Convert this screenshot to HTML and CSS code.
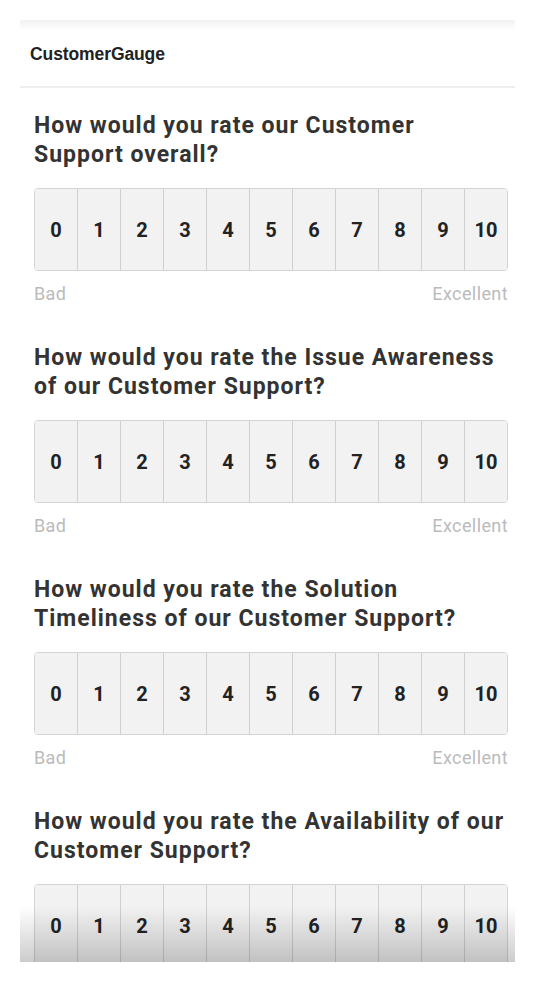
FILE: index.html
```html
<!DOCTYPE html>
<html lang="en">
  <head>
    <meta charset="UTF-8" />
    <meta name="viewport" content="width=device-width, initial-scale=1.0" />
    <title>Customer Support Survey</title>
    <link rel="stylesheet" href="styles.css">
  </head>
  <body>
    <main class="survey">
      <header class="survey-header">
        <span class="logo">CustomerGauge</span>
      </header>

      <section class="question">
        <h2>How would you rate our Customer Support overall?</h2>
        <div class="scale">
          <button>0</button><button>1</button><button>2</button><button>3</button>
          <button>4</button><button>5</button><button>6</button><button>7</button>
          <button>8</button><button>9</button><button>10</button>
        </div>
        <div class="scale-labels"><span>Bad</span><span>Excellent</span></div>
      </section>

      <section class="question">
        <h2>How would you rate the Issue Awareness of our Customer Support?</h2>
        <div class="scale">
          <button>0</button><button>1</button><button>2</button><button>3</button>
          <button>4</button><button>5</button><button>6</button><button>7</button>
          <button>8</button><button>9</button><button>10</button>
        </div>
        <div class="scale-labels"><span>Bad</span><span>Excellent</span></div>
      </section>

      <section class="question">
        <h2>How would you rate the Solution Timeliness of our Customer Support?</h2>
        <div class="scale">
          <button>0</button><button>1</button><button>2</button><button>3</button>
          <button>4</button><button>5</button><button>6</button><button>7</button>
          <button>8</button><button>9</button><button>10</button>
        </div>
        <div class="scale-labels"><span>Bad</span><span>Excellent</span></div>
      </section>

      <section class="question">
        <h2>How would you rate the Availability of our Customer Support?</h2>
        <div class="scale">
          <button>0</button><button>1</button><button>2</button><button>3</button>
          <button>4</button><button>5</button><button>6</button><button>7</button>
          <button>8</button><button>9</button><button>10</button>
        </div>
      </section>
    </main>
  </body>
</html>
```

FILE: styles.css
```css
body {
  margin: 0;
  background: #fff;
  font-family: Roboto, "Liberation Sans", sans-serif;
}

.survey {
  position: relative;
  width: 495px;
  height: 942px;
  margin: 20px 0 0 20px;
  overflow: hidden;

  &::after {
    content: "";
    position: absolute;
    left: 0;
    right: 0;
    bottom: 0;
    height: 56px;
    background: linear-gradient(rgba(0, 0, 0, 0), rgba(0, 0, 0, 0.2));
  }
}

.survey-header {
  display: flex;
  align-items: center;
  height: 68px;
  padding: 2px 0 0 10px;
  background: linear-gradient(#f1f1f1, #fff 10px);
  border-bottom: 2px solid #eee;
  box-sizing: border-box;
}

.logo {
  font-family: "Liberation Sans", Arial, sans-serif;
  font-weight: bold;
  font-size: 17.5px;
  letter-spacing: -0.1px;
  color: #222;
}

.question {
  padding: 0 7px 0 14px;

  h2 {
    margin: 23px 0 19px;
    font-size: 23px;
    line-height: 29px;
    font-weight: bold;
    letter-spacing: 1px;
    color: #333;
  }

  & + .question h2 {
    margin-top: 38px;
  }
}

.scale {
  display: flex;
  height: 83px;
  border: 1px solid #d4d4d4;
  border-radius: 4px;
  overflow: hidden;
  box-sizing: border-box;

  button {
    flex: 1;
    border: 0;
    border-left: 1px solid #d0d0d0;
    background: #f2f2f2;
    font-family: Roboto, "Liberation Sans", sans-serif;
    font-size: 20px;
    font-weight: bold;
    color: #222;
    padding: 0;
    cursor: pointer;

    &:first-child {
      border-left: 0;
    }
  }
}

.scale-labels {
  display: flex;
  justify-content: space-between;
  margin-top: 12px;
  font-size: 18px;
  line-height: 22px;
  letter-spacing: 0.4px;
  color: #bbb;
}
```
